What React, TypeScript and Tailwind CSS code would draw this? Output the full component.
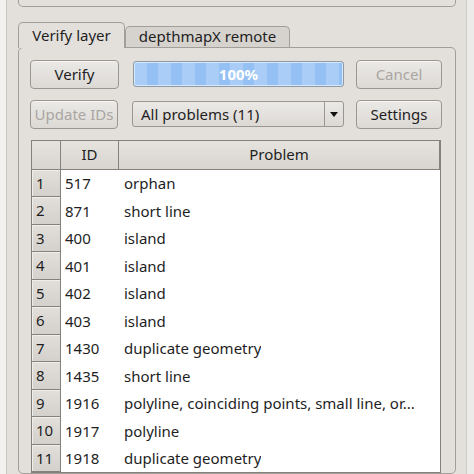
import React from "react";

const rows: [string, string][] = [
  ["517", "orphan"],
  ["871", "short line"],
  ["400", "island"],
  ["401", "island"],
  ["402", "island"],
  ["403", "island"],
  ["1430", "duplicate geometry"],
  ["1435", "short line"],
  ["1916", "polyline, coinciding points, small line, or..."],
  ["1917", "polyline"],
  ["1918", "duplicate geometry"],
];

const btn =
  "flex items-center justify-center rounded-[4px] border border-[#9a9792] bg-gradient-to-b from-[#ebe9e6] to-[#dcd9d5] shadow-[inset_0_1px_0_#f6f5f3] text-[15px]";

export default function App() {
  return (
    <div
      className="flex h-[474px] w-[474px] overflow-hidden bg-[#f3f2f0] text-[#1e1e1e]"
      style={{ fontFamily: '"Noto Sans", "DejaVu Sans", sans-serif' }}
    >
      <div className="w-[7px] border-r border-[#c9c6c2]" />
      <div className="flex min-w-0 flex-1 flex-col bg-[#e3e0dc] pl-[11px] pr-[10px]">
        <div className="h-[12px] rounded-b-[5px] border-x border-b border-[#a29f9b]" />

        <div className="mt-[15px] flex items-end">
          <div className="relative z-10 -mb-px flex h-[26px] w-[107px] items-center justify-center rounded-t-[5px] border-x border-t border-[#a29f9b] bg-[#e3e0dc] text-[15px]">
            Verify layer
          </div>
          <div className="flex h-[21px] w-[165px] items-center justify-center rounded-t-[5px] border-x border-t border-[#a29f9b] bg-[#d6d3ce] text-[15px]">
            depthmapX remote
          </div>
        </div>

        <div className="flex flex-1 flex-col rounded-[5px] border border-[#a29f9b] pl-[11px] pt-[12px]">
          <div className="flex items-center">
            <div className={`${btn} h-[29px] w-[89px]`}>Verify</div>
            <div className="relative ml-[14px] h-[26px] w-[211px] rounded-[3px] border border-[#8f9aa6] bg-[repeating-linear-gradient(90deg,#a9cdf7_0px,#a9cdf7_13px,#95c0f3_13px,#95c0f3_24px)] shadow-[inset_0_0_0_1px_#d6e8fc]">
              <div className="flex h-full items-center justify-center text-[15px] font-bold text-white">
                100%
              </div>
            </div>
            <div className={`${btn} ml-[12px] h-[29px] w-[86px] text-[#a9a6a2]`}>Cancel</div>
          </div>

          <div className="mt-[11px] flex items-center">
            <div className={`${btn} h-[29px] w-[88px] text-[#a9a6a2]`}>Update IDs</div>
            <div className="ml-[14px] flex h-[26px] w-[212px] items-center rounded-[3px] border border-[#9a9792] bg-gradient-to-b from-[#ebe9e6] to-[#dcd9d5]">
              <span className="flex-1 pl-[8px] text-[15px]">All problems (11)</span>
              <div className="flex h-full w-[19px] items-center justify-center border-l border-[#9a9792]">
                <svg width="8" height="5" viewBox="0 0 8 5">
                  <path d="M0 0h8L4 5z" fill="#111" />
                </svg>
              </div>
            </div>
            <div className={`${btn} ml-[12px] h-[29px] w-[86px]`}>Settings</div>
          </div>

          <div className="ml-[1px] mt-[11px] w-[410px] border border-[#85827e] bg-white text-[15px]">
            <div className="flex h-[29px] border-b border-[#85827e] bg-gradient-to-b from-[#e6e3df] to-[#d8d5d0]">
              <div className="w-[29px] border-r border-[#85827e]" />
              <div className="flex w-[58px] items-center justify-center border-r border-[#85827e]">ID</div>
              <div className="flex flex-1 items-center justify-center border-r border-[#85827e]">Problem</div>
            </div>
            {rows.map(([id, problem], i) => (
              <div key={i} className="flex h-[27.5px]">
                <div className="flex w-[29px] items-center border-b border-r border-[#85827e] bg-gradient-to-b from-[#e2dfdb] to-[#d4d1cc] pl-[4px] shadow-[inset_1px_1px_0_#f0eeeb]">
                  {i + 1}
                </div>
                <div className="flex w-[58px] items-center pl-[4px]">{id}</div>
                <div className="flex min-w-0 flex-1 items-center pl-[5px]">
                  <span className="truncate">{problem}</span>
                </div>
              </div>
            ))}
          </div>
        </div>
      </div>
      <div className="w-[8px] border-l border-[#d0cdc9] bg-[#ecebe9]" />
    </div>
  );
}
